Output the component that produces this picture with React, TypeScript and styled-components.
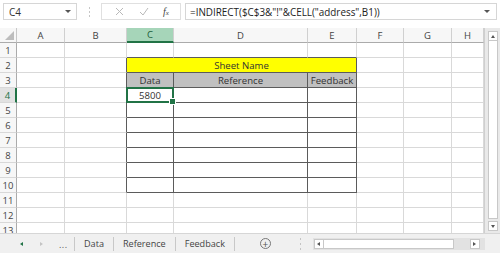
import React from "react";
import styled, { createGlobalStyle } from "styled-components";

const Global = createGlobalStyle`
  html, body { margin: 0; padding: 0; background: #fff; }
  body { font-family: "Open Sans", "Liberation Sans", sans-serif; }
  * { box-sizing: border-box; }
`;

const Frame = styled.div`
  width: 500px;
  height: 253px;
  display: flex;
  flex-direction: column;
  overflow: hidden;
  background: #fff;
`;

const TopBar = styled.div`
  height: 28px;
  display: flex;
  align-items: flex-start;
  padding: 3px 3px 0 3px;
  background: #fff;
`;

const NameBox = styled.div`
  width: 74px;
  height: 17px;
  border: 1px solid #d6d6d6;
  display: flex;
  align-items: center;
  justify-content: space-between;
  padding: 0 5px 0 5px;
  font-size: 10px;
  color: #333;
`;

const Caret = styled.span`
  width: 0;
  height: 0;
  border-left: 3px solid transparent;
  border-right: 3px solid transparent;
  border-top: 3px solid #555;
`;

const Grip = styled.div`
  width: 24px;
  height: 17px;
  display: flex;
  flex-direction: column;
  align-items: center;
  justify-content: center;
  gap: 2px;
  & > i {
    width: 1px;
    height: 2px;
    background: #c6c6c6;
    display: block;
  }
`;

const FxGroup = styled.div`
  width: 80px;
  height: 17px;
  border: 1px solid #e0e0e0;
  display: flex;
  align-items: center;
  justify-content: space-around;
  padding: 0 4px 0 6px;
`;

const FxLabel = styled.span`
  font-family: "Liberation Serif", serif;
  font-style: italic;
  font-size: 10px;
  color: #444;
  & > small {
    font-size: 7px;
  }
`;

const FormulaInput = styled.div`
  margin-left: 4px;
  flex: 1;
  height: 17px;
  border: 1px solid #d6d6d6;
  display: flex;
  align-items: center;
  justify-content: space-between;
  padding: 0 6px 0 4px;
  font-size: 9.9px;
  color: #222;
  white-space: nowrap;
`;

const Main = styled.div`
  height: 205px;
  display: flex;
`;

const SheetGrid = styled.div`
  width: 484px;
  height: 205px;
  overflow: hidden;
  display: grid;
  grid-template-columns: 17px 48px 62px 47px 134px 49px 47px 48px 32px;
  grid-auto-rows: 15px;
  align-content: start;
`;

const Corner = styled.div`
  position: relative;
  background: #f7f7f7;
  border-right: 1px solid #c8c8c8;
  border-bottom: 1px solid #ababab;
  &::after {
    content: "";
    position: absolute;
    right: 2px;
    bottom: 2px;
    width: 0;
    height: 0;
    border-left: 9px solid transparent;
    border-bottom: 9px solid #bdbdbd;
  }
`;

const ColHead = styled.div<{ $sel?: boolean }>`
  background: ${(p) => (p.$sel ? "#a6d5b9" : "#f7f7f7")};
  border-right: 1px solid #d0d0d0;
  border-bottom: ${(p) => (p.$sel ? "2px solid #217346" : "1px solid #ababab")};
  display: flex;
  align-items: center;
  justify-content: center;
  font-size: 9.5px;
  color: ${(p) => (p.$sel ? "#1d5e39" : "#444")};
`;

const RowHead = styled.div<{ $sel?: boolean }>`
  background: ${(p) => (p.$sel ? "#e2e2e2" : "#f7f7f7")};
  border-right: ${(p) => (p.$sel ? "2px solid #217346" : "1px solid #ababab")};
  border-bottom: 1px solid #d8d8d8;
  display: flex;
  align-items: center;
  justify-content: center;
  font-size: 9.5px;
  color: ${(p) => (p.$sel ? "#217346" : "#444")};
`;

const Cell = styled.div<{
  $right: string;
  $bottom: string;
  $bg?: string;
  $span?: number;
  $sel?: boolean;
}>`
  position: relative;
  grid-column: ${(p) => (p.$span ? `span ${p.$span}` : "auto")};
  background: ${(p) => p.$bg || "#fff"};
  border-right: 1px solid ${(p) => p.$right};
  border-bottom: 1px solid ${(p) => p.$bottom};
  display: flex;
  align-items: center;
  justify-content: center;
  font-family: "Open Sans", "Liberation Sans", sans-serif;
  font-size: 9.6px;
  color: #333;
  white-space: nowrap;
  ${(p) =>
    p.$sel
      ? `
    &::after {
      content: "";
      position: absolute;
      left: -1px; top: -1px; right: -1px; bottom: -1px;
      border: 2px solid #217346;
      pointer-events: none;
    }
    &::before {
      content: "";
      position: absolute;
      right: -3px; bottom: -3px;
      width: 5px; height: 5px;
      background: #217346;
      border: 1px solid #fff;
      z-index: 2;
    }
  `
      : ""}
`;

const VScroll = styled.div`
  width: 16px;
  height: 205px;
  background: #e9e9e9;
  border-left: 1px solid #cfcfcf;
  display: flex;
  flex-direction: column;
  align-items: center;
  padding: 3px 0 2px 0;
`;

const ScrollBtn = styled.div<{ $dir: "up" | "down" | "left" | "right" }>`
  width: 10px;
  height: 10px;
  background: #fff;
  border: 1px solid #c8c8c8;
  display: flex;
  align-items: center;
  justify-content: center;
  flex-shrink: 0;
  &::after {
    content: "";
    width: 0;
    height: 0;
    ${(p) =>
      p.$dir === "up"
        ? "border-left: 2.5px solid transparent; border-right: 2.5px solid transparent; border-bottom: 3px solid #555;"
        : p.$dir === "down"
        ? "border-left: 2.5px solid transparent; border-right: 2.5px solid transparent; border-top: 3px solid #555;"
        : p.$dir === "left"
        ? "border-top: 2.5px solid transparent; border-bottom: 2.5px solid transparent; border-right: 3px solid #555;"
        : "border-top: 2.5px solid transparent; border-bottom: 2.5px solid transparent; border-left: 3px solid #555;"}
  }
`;

const VThumb = styled.div`
  width: 10px;
  flex: 1;
  background: #fff;
  border: 1px solid #c8c8c8;
  border-top: none;
  margin-bottom: 2px;
`;

const TabBar = styled.div`
  height: 20px;
  background: #f0f0f0;
  border-top: 1px solid #d6d6d6;
  display: flex;
  align-items: center;
  font-size: 9.1px;
  color: #444;
`;

const NavArrow = styled.span<{ $active?: boolean; $dir: "left" | "right" }>`
  width: 0;
  height: 0;
  border-top: 2.5px solid transparent;
  border-bottom: 2.5px solid transparent;
  ${(p) =>
    p.$dir === "left"
      ? `border-right: 3px solid ${p.$active ? "#217346" : "#c4c4c4"};`
      : `border-left: 3px solid ${p.$active ? "#217346" : "#c4c4c4"};`}
`;

const NavGap = styled.span`
  width: 17px;
`;

const NavGroup = styled.div`
  width: 74px;
  display: flex;
  align-items: center;
  padding-left: 20px;
`;

const Ellipsis = styled.span`
  margin-left: 16px;
  font-size: 9px;
  color: #555;
  letter-spacing: 0.5px;
  padding-top: 2px;
`;

const Tab = styled.div`
  height: 14px;
  border-left: 1px solid #c8c8c8;
  display: flex;
  align-items: center;
  padding: 0 9px;
`;

const TabEnd = styled.div`
  height: 14px;
  border-left: 1px solid #c8c8c8;
  width: 25px;
`;

const AddBtn = styled.div`
  width: 11px;
  height: 11px;
  border-radius: 50%;
  border: 1px solid #777;
  display: flex;
  align-items: center;
  justify-content: center;
  font-size: 10px;
  line-height: 1;
  color: #555;
  margin-left: 1px;
`;

const TabGrip = styled.div`
  margin-left: 29px;
  width: 2px;
  height: 12px;
  display: flex;
  flex-direction: column;
  justify-content: space-between;
  & > i {
    width: 1px;
    height: 2px;
    background: #c4c4c4;
    display: block;
  }
`;

const HScroll = styled.div`
  margin-left: 11px;
  width: 172px;
  height: 12px;
  background: #e2e2e2;
  display: flex;
  align-items: center;
  padding: 0 5px 0 1px;
`;

const HThumb = styled.div`
  width: 130px;
  height: 10px;
  background: #fff;
  border: 1px solid #c8c8c8;
  border-left: none;
  margin-right: auto;
`;

const cols = ["A", "B", "C", "D", "E", "F", "G", "H"];
const ROWS = 13;
const DARK = "#5b5b5b";
const GRID = "#d9d9d9";

const inTable = (r: number, c: number) => r >= 2 && r <= 10 && c >= 3 && c <= 5;

export default function App() {
  const rows: React.ReactNode[] = [];
  for (let r = 1; r <= ROWS; r++) {
    rows.push(
      <RowHead key={`rh${r}`} $sel={r === 4}>
        {r}
      </RowHead>
    );
    for (let c = 1; c <= 8; c++) {
      const right = inTable(r, c) || inTable(r, c + 1) ? DARK : GRID;
      const bottom = inTable(r, c) || inTable(r + 1, c) ? DARK : GRID;
      if (r === 2 && c === 3) {
        rows.push(
          <Cell key={`c${r}-${c}`} $span={3} $bg="#ffff00" $right={DARK} $bottom={DARK}>
            Sheet Name
          </Cell>
        );
        continue;
      }
      if (r === 2 && (c === 4 || c === 5)) continue;
      let text = "";
      let bg: string | undefined;
      if (r === 3 && c >= 3 && c <= 5) {
        bg = "#c0c0c0";
        text = ["Data", "Reference", "Feedback"][c - 3];
      }
      if (r === 4 && c === 3) text = "5800";
      rows.push(
        <Cell
          key={`c${r}-${c}`}
          $right={right}
          $bottom={bottom}
          $bg={bg}
          $sel={r === 4 && c === 3}
        >
          {text}
        </Cell>
      );
    }
  }

  return (
    <>
      <Global />
      <Frame>
        <TopBar>
          <NameBox>
            <span>C4</span>
            <Caret />
          </NameBox>
          <Grip>
            <i />
            <i />
            <i />
          </Grip>
          <FxGroup>
            <svg width="9" height="9" viewBox="0 0 9 9">
              <path d="M1 1 L8 8 M8 1 L1 8" stroke="#b9b9b9" strokeWidth="1" fill="none" />
            </svg>
            <svg width="10" height="9" viewBox="0 0 10 9">
              <path d="M1 5 L4 8 L9 1" stroke="#b9b9b9" strokeWidth="1" fill="none" />
            </svg>
            <FxLabel>
              f<small>x</small>
            </FxLabel>
          </FxGroup>
          <FormulaInput>
            <span>=INDIRECT($C$3&"!"&CELL("address",B1))</span>
            <Caret />
          </FormulaInput>
        </TopBar>
        <Main>
          <SheetGrid>
            <Corner />
            {cols.map((c) => (
              <ColHead key={c} $sel={c === "C"}>
                {c}
              </ColHead>
            ))}
            {rows}
          </SheetGrid>
          <VScroll>
            <ScrollBtn $dir="up" />
            <VThumb />
            <ScrollBtn $dir="down" />
          </VScroll>
        </Main>
        <TabBar>
          <NavGroup>
            <NavArrow $dir="left" $active />
            <NavGap />
            <NavArrow $dir="right" />
            <Ellipsis>...</Ellipsis>
          </NavGroup>
          <Tab>Data</Tab>
          <Tab>Reference</Tab>
          <Tab>Feedback</Tab>
          <TabEnd />
          <AddBtn>+</AddBtn>
          <TabGrip>
            <i />
            <i />
            <i />
          </TabGrip>
          <HScroll>
            <ScrollBtn $dir="left" />
            <HThumb />
            <ScrollBtn $dir="right" />
          </HScroll>
        </TabBar>
      </Frame>
    </>
  );
}
